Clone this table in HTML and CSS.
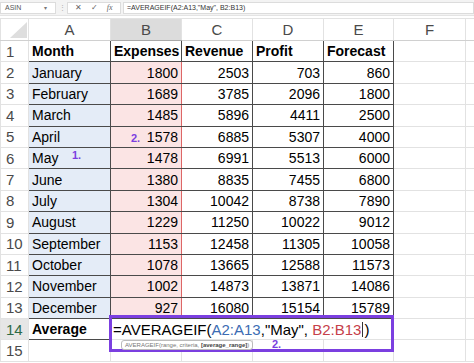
FILE: index.html
```html
<!DOCTYPE html>
<html lang="en">
<head>
  <meta charset="UTF-8" />
  <title>AVERAGEIF example</title>
  <link rel="stylesheet" href="styles.css">
</head>
<body>
  <div class="formula-bar">
    <div class="name-box"><span>ASIN</span><span class="caret">▾</span></div>
    <div class="dots">⋮</div>
    <div class="fx-box"><span>✕</span><span>✓</span><span class="fx">fx</span></div>
    <div class="formula-input">=AVERAGEIF(A2:A13,"May", B2:B13)</div>
  </div>

  <div class="sheet">
    <table class="grid">
      <colgroup>
        <col class="c-row"><col class="c-a"><col class="c-b"><col class="c-c"><col class="c-d"><col class="c-e"><col class="c-f"><col class="c-g">
      </colgroup>
      <tr class="col-heads">
        <th class="corner"><span class="tri"></span></th>
        <th>A</th><th class="sel">B</th><th>C</th><th>D</th><th>E</th><th>F</th><th></th>
      </tr>
      <tr>
        <th>1</th>
        <td class="data hd">Month</td><td class="data hd">Expenses</td><td class="data hd">Revenue</td><td class="data hd">Profit</td><td class="data hd">Forecast</td><td></td><td></td>
      </tr>
      <tr><th>2</th><td class="data mon">January</td><td class="data num exp">1800</td><td class="data num">2503</td><td class="data num">703</td><td class="data num">860</td><td></td><td></td></tr>
      <tr><th>3</th><td class="data mon">February</td><td class="data num exp">1689</td><td class="data num">3785</td><td class="data num">2096</td><td class="data num">1800</td><td></td><td></td></tr>
      <tr><th>4</th><td class="data mon">March</td><td class="data num exp">1485</td><td class="data num">5896</td><td class="data num">4411</td><td class="data num">2500</td><td></td><td></td></tr>
      <tr><th>5</th><td class="data mon">April</td><td class="data num exp">1578</td><td class="data num">6885</td><td class="data num">5307</td><td class="data num">4000</td><td></td><td></td></tr>
      <tr><th>6</th><td class="data mon">May</td><td class="data num exp">1478</td><td class="data num">6991</td><td class="data num">5513</td><td class="data num">6000</td><td></td><td></td></tr>
      <tr><th>7</th><td class="data mon">June</td><td class="data num exp">1380</td><td class="data num">8835</td><td class="data num">7455</td><td class="data num">6800</td><td></td><td></td></tr>
      <tr><th>8</th><td class="data mon">July</td><td class="data num exp">1304</td><td class="data num">10042</td><td class="data num">8738</td><td class="data num">7890</td><td></td><td></td></tr>
      <tr><th>9</th><td class="data mon">August</td><td class="data num exp">1229</td><td class="data num">11250</td><td class="data num">10022</td><td class="data num">9012</td><td></td><td></td></tr>
      <tr><th>10</th><td class="data mon">September</td><td class="data num exp">1153</td><td class="data num">12458</td><td class="data num">11305</td><td class="data num">10058</td><td></td><td></td></tr>
      <tr><th>11</th><td class="data mon">October</td><td class="data num exp">1078</td><td class="data num">13665</td><td class="data num">12588</td><td class="data num">11573</td><td></td><td></td></tr>
      <tr><th>12</th><td class="data mon">November</td><td class="data num exp">1002</td><td class="data num">14873</td><td class="data num">13871</td><td class="data num">14086</td><td></td><td></td></tr>
      <tr><th>13</th><td class="data mon">December</td><td class="data num exp">927</td><td class="data num">16080</td><td class="data num">15154</td><td class="data num">15789</td><td></td><td></td></tr>
      <tr class="active-row">
        <th>14</th>
        <td class="data hd">Average</td>
        <td class="editing" colspan="4">=AVERAGEIF(<span class="ref-a">A2:A13</span>,"May", <span class="ref-b">B2:B13</span><span class="cursor"></span>)</td>
        <td></td><td></td>
      </tr>
      <tr><th>15</th><td></td><td></td><td></td><td></td><td></td><td></td><td></td></tr>
    </table>

    <div class="edit-frame"></div>
    <div class="tip">AVERAGEIF(range, criteria, <b>[average_range]</b>)</div>
    <span class="note note-may">1.</span>
    <span class="note note-apr">2.</span>
    <span class="note note-avg">2.</span>
  </div>
</body>
</html>
```

FILE: styles.css
```css
* { box-sizing: border-box; }
body {
  margin: 0;
  background: #fff;
  font-family: 'Liberation Sans', Arial, sans-serif;
  color: #000;
  overflow: hidden;
  width: 474px;
  height: 363px;
}

/* formula bar */
.formula-bar {
  display: flex;
  align-items: center;
  height: 16px;
  background: #f3f3f3;
  border-bottom: 1px solid #e4e4e4;
  font-size: 7px;
  color: #555;
}
.name-box {
  width: 56px; height: 12px;
  background: #fff;
  border: 1px solid #dcdcdc;
  display: flex; align-items: center; justify-content: space-between;
  padding: 0 8px 0 4px;
}
.caret { font-size: 6px; color: #777; }
.dots { width: 10px; text-align: center; color: #aaa; margin-left: 1px; }
.fx-box {
  width: 54px; height: 12px;
  background: #fff;
  border: 1px solid #dcdcdc;
  display: flex; align-items: center; justify-content: space-around;
  padding: 0 3px;
  font-size: 8px; color: #666;
}
.fx-box .fx { font-style: italic; font-family: 'Liberation Serif', serif; }
.formula-input {
  flex: 1; height: 12px;
  background: #fff;
  border: 1px solid #dcdcdc;
  margin-left: 2px;
  padding-left: 3px;
  line-height: 10px;
  color: #333;
}

/* sheet */
.sheet { position: relative; margin-top: 2px; }
.grid {
  border-collapse: collapse;
  table-layout: fixed;
  width: 474px;
  font-size: 14px;
}
.c-row { width: 28px; }
.c-a { width: 82px; }
.c-b { width: 71px; }
.c-c { width: 71px; }
.c-d { width: 71px; }
.c-e { width: 70px; }
.c-f { width: 72px; }
.c-g { width: 9px; }

.grid td, .grid th {
  height: 21.4px;
  padding: 0 3px;
  border: 1px solid #e2e2e2;
  white-space: nowrap;
  overflow: hidden;
}
.grid th {
  font-weight: normal;
  color: #4a4a4a;
  font-size: 15px;
  text-align: center;
  background: #fff;
}
.grid tr th:first-child { text-align: left; padding-left: 5px; }
.col-heads th { height: 22px; text-align: center !important; border-bottom-color: #d0d0d0; }
.col-heads th.sel { background: #dcdcdc; border-bottom: 1px solid #a8a8a8; }
.corner { position: relative; }
.tri {
  position: absolute; right: 1px; bottom: 2px;
  width: 0; height: 0;
  border-left: 17px solid transparent;
  border-bottom: 16px solid #dedede;
}

.grid td.data { border: 1px solid #4a4a4a; }
.hd { font-weight: bold; }
.num { text-align: right; }
.mon { background: #e4ecf7; }
.exp { background: #fbe4e4; border-left-color: #d88 !important; border-right-color: #d66 !important; }

.active-row th { background: #e6e6e6; color: #2d6a47; }
.editing {
  font-size: 15px;
  overflow: visible !important;
  padding-left: 2px !important;
  border-color: #e2e2e2 !important;
}
.ref-a { color: #3b6cb3; }
.ref-b { color: #c6404a; }
.cursor {
  display: inline-block;
  width: 1px; height: 15px;
  background: #333;
  vertical-align: -2px;
  margin: 0 1px;
}

/* overlays */
.edit-frame {
  position: absolute;
  left: 109px; top: 297px;
  width: 285px; height: 37px;
  border: 3px solid #7b3fe0;
}
.tip {
  position: absolute;
  left: 121px; top: 322px;
  padding: 0 3px;
  height: 10px;
  line-height: 9px;
  font-size: 6px;
  color: #777;
  background: #fff;
  border: 1px solid #bbb;
  border-radius: 3px;
}
.tip b { color: #444; }
.note {
  position: absolute;
  color: #7b3fe0;
  font-weight: bold;
  font-size: 11px;
}
.note-may { left: 72px; top: 131px; }
.note-apr { left: 131px; top: 114px; }
.note-avg { left: 272px; top: 320px; }
```
